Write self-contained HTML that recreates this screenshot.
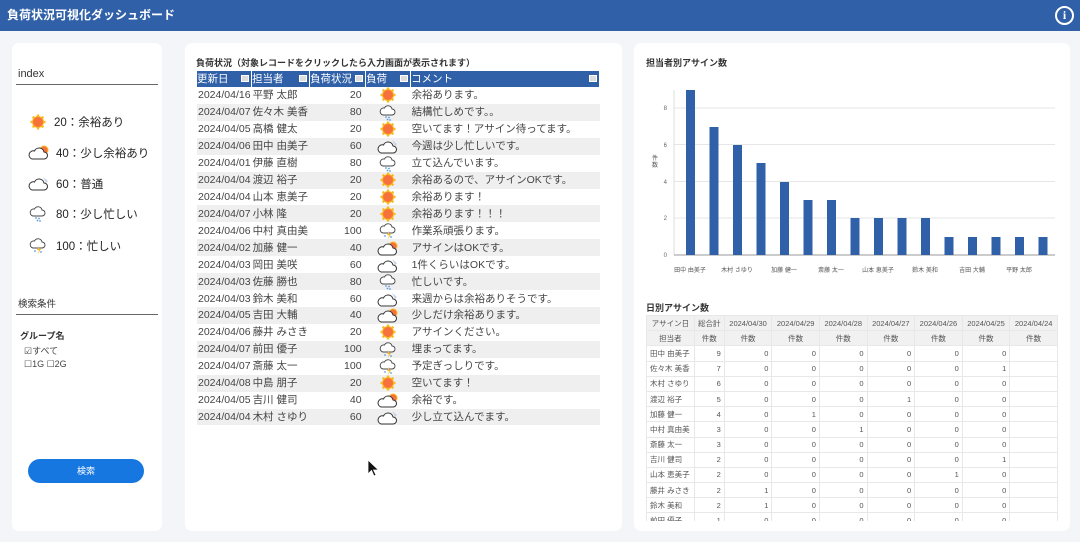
<!DOCTYPE html>
<html><head><meta charset="utf-8"><style>
*{margin:0;padding:0;box-sizing:border-box}
body{width:1080px;height:542px;background:#f3f5f9;font-family:"Liberation Sans","Noto Sans CJK JP",sans-serif;position:relative;overflow:hidden;color:#333}
.hdr{position:absolute;left:0;top:0;width:1080px;height:31px;background:#3060a8;color:#fff;font-weight:bold;font-size:12px;line-height:31px;padding-left:7px}
.info{position:absolute;right:6px;top:6px;width:19px;height:19px;border:2px solid #fff;border-radius:50%;color:#fff;font-size:12px;line-height:15px;text-align:center;font-weight:bold;font-family:"Liberation Serif",serif}
.panel{position:absolute;background:#fff;border-radius:7px;top:43px;height:488px}
.ttl{position:absolute;font-size:9px;font-weight:bold;color:#333}
.lh{position:absolute;left:4px;width:142px;border-bottom:1px solid #666;font-size:11px;line-height:14px;color:#333;padding-left:2px;padding-bottom:3px}
.idx{position:absolute;left:16px;font-size:11.5px;color:#222;display:flex;align-items:center}
.idx svg{margin-right:6px}
table{border-collapse:collapse}
#t1{position:absolute;left:12px;top:28px;font-size:10.5px;color:#444;table-layout:fixed}
#t1 th{background:#3060a8;color:#fff;font-weight:normal;text-align:left;height:16px;line-height:16px;border-right:1px solid #fff;padding:0;position:relative;vertical-align:middle}
#t1 th i{position:absolute;right:2px;top:4px;width:8px;height:7px;background:#ddd;border:1px solid #fff}
#t1 td{height:16.9px;line-height:16px;padding:0 1px;white-space:nowrap;vertical-align:middle;overflow:hidden}
#t1 tr:nth-child(odd) td{background:#efefef}
#t1 td.n{text-align:right;padding-right:4px}
#t1 td.c{text-align:center;padding:0;line-height:0}
#t1 td svg{vertical-align:middle}
#t2{position:absolute;left:12px;top:272px;font-size:7.5px;color:#555}
#t2 td{height:15.2px;line-height:13px;border:1px solid #e8e8e8;text-align:right;padding:0 3px;white-space:nowrap;vertical-align:middle}
#t2 tr.h td{background:#f1f1f1;text-align:center}
#t2 td.l{text-align:left}
</style></head><body>
<svg width="0" height="0" style="position:absolute">
<defs>
<g id="sun"><g stroke="#f8b820" stroke-width="2.4"><line x1="8" y1="0.5" x2="8" y2="15.5"/><line x1="0.5" y1="8" x2="15.5" y2="8"/><line x1="2.7" y1="2.7" x2="13.3" y2="13.3"/><line x1="13.3" y1="2.7" x2="2.7" y2="13.3"/></g><circle cx="8" cy="8" r="5.5" fill="#f7713a" stroke="#f8b820" stroke-width="1"/></g>
<g id="cl"><path d="M4 15 h12 a3.5 3.5 0 0 0 0-7 a5 5 0 0 0-9.5-1 a4 4 0 0 0-2.5 8z" fill="#fff" stroke="#333" stroke-width="1"/></g>
<g id="c40"><circle cx="16" cy="6" r="4" fill="#f7713a" stroke="#f8b820"/><use href="#cl"/></g>
<g id="c60"><path d="M15 2 l5 4 l-2 2z" fill="#c8d4e8"/><use href="#cl"/></g>
<g id="c80"><path d="M5 11 h9 a3 3 0 0 0 0-6 a4 4 0 0 0-7.5-1 a3.5 3.5 0 0 0-1.5 7z" fill="#fff" stroke="#444" stroke-width="0.9"/><g fill="#5b9ae0"><circle cx="8" cy="13" r="0.9"/><circle cx="11" cy="13.5" r="0.9"/><circle cx="9.5" cy="15.5" r="0.9"/><circle cx="12" cy="16" r="0.9"/></g></g>
<g id="c100"><path d="M5 11 h9 a3 3 0 0 0 0-6 a4 4 0 0 0-7.5-1 a3.5 3.5 0 0 0-1.5 7z" fill="#fff" stroke="#444" stroke-width="0.9"/><path d="M11 9 l-2 4 h2 l-1 4 l3-5 h-2z" fill="#f8b820"/><g fill="#5b9ae0"><circle cx="7" cy="14" r="0.9"/><circle cx="13" cy="15" r="0.9"/></g></g>
</defs></svg>
<div class="hdr">負荷状況可視化ダッシュボード</div><div class="info">i</div>

<div class="panel" style="left:12px;width:150px">
<div class="lh" style="top:24px">index</div>
<div class="idx" style="top:70px"><svg width="20" height="18"><use href="#sun" x="2" y="1"/></svg>20：余裕あり</div>
<div class="idx" style="top:101px"><svg width="22" height="18"><use href="#c40"/></svg>40：少し余裕あり</div>
<div class="idx" style="top:132px"><svg width="22" height="18"><use href="#c60"/></svg>60：普通</div>
<div class="idx" style="top:162px"><svg width="22" height="18"><use href="#c80"/></svg>80：少し忙しい</div>
<div class="idx" style="top:194px"><svg width="22" height="18"><use href="#c100"/></svg>100：忙しい</div>
<div class="lh" style="top:255px;font-size:9.5px;padding-bottom:2px">検索条件</div>
<div style="position:absolute;left:8px;top:286px;font-size:9px;font-weight:bold">グループ名</div>
<div style="position:absolute;left:12px;top:302px;font-size:9px;color:#444;line-height:13px">☑すべて<br>☐1G ☐2G</div>
<div style="position:absolute;left:16px;top:416px;width:116px;height:24px;border-radius:12px;background:#1677e0;color:#fff;font-size:9px;text-align:center;line-height:24px">検索</div>
</div>

<div class="panel" style="left:185px;width:437px">
<div class="ttl" style="left:11px;top:13px">負荷状況（対象レコードをクリックしたら入力画面が表示されます）</div>
<table id="t1">
<colgroup><col style="width:54px"><col style="width:58px"><col style="width:56px"><col style="width:45px"><col style="width:189px"></colgroup>
<tr><th>更新日<i></i></th><th>担当者<i></i></th><th>負荷状況<i></i></th><th>負荷<i></i></th><th>コメント<i></i></th></tr>
<tr><td>2024/04/16</td><td>平野 太郎</td><td class="n">20</td><td class="c"><svg width="16" height="16"><use href="#sun"/></svg></td><td>余裕あります。</td></tr>
<tr><td>2024/04/07</td><td>佐々木 美香</td><td class="n">80</td><td class="c"><svg width="20" height="17"><use href="#c80"/></svg></td><td>結構忙しめです。。</td></tr>
<tr><td>2024/04/05</td><td>高橋 健太</td><td class="n">20</td><td class="c"><svg width="16" height="16"><use href="#sun"/></svg></td><td>空いてます！アサイン待ってます。</td></tr>
<tr><td>2024/04/06</td><td>田中 由美子</td><td class="n">60</td><td class="c"><svg width="22" height="16"><use href="#c60"/></svg></td><td>今週は少し忙しいです。</td></tr>
<tr><td>2024/04/01</td><td>伊藤 直樹</td><td class="n">80</td><td class="c"><svg width="20" height="17"><use href="#c80"/></svg></td><td>立て込んでいます。</td></tr>
<tr><td>2024/04/04</td><td>渡辺 裕子</td><td class="n">20</td><td class="c"><svg width="16" height="16"><use href="#sun"/></svg></td><td>余裕あるので、アサインOKです。</td></tr>
<tr><td>2024/04/04</td><td>山本 恵美子</td><td class="n">20</td><td class="c"><svg width="16" height="16"><use href="#sun"/></svg></td><td>余裕あります！</td></tr>
<tr><td>2024/04/07</td><td>小林 隆</td><td class="n">20</td><td class="c"><svg width="16" height="16"><use href="#sun"/></svg></td><td>余裕あります！！！</td></tr>
<tr><td>2024/04/06</td><td>中村 真由美</td><td class="n">100</td><td class="c"><svg width="20" height="17"><use href="#c100"/></svg></td><td>作業系頑張ります。</td></tr>
<tr><td>2024/04/02</td><td>加藤 健一</td><td class="n">40</td><td class="c"><svg width="22" height="16"><use href="#c40"/></svg></td><td>アサインはOKです。</td></tr>
<tr><td>2024/04/03</td><td>岡田 美咲</td><td class="n">60</td><td class="c"><svg width="22" height="16"><use href="#c60"/></svg></td><td>1件くらいはOKです。</td></tr>
<tr><td>2024/04/03</td><td>佐藤 勝也</td><td class="n">80</td><td class="c"><svg width="20" height="17"><use href="#c80"/></svg></td><td>忙しいです。</td></tr>
<tr><td>2024/04/03</td><td>鈴木 美和</td><td class="n">60</td><td class="c"><svg width="22" height="16"><use href="#c60"/></svg></td><td>来週からは余裕ありそうです。</td></tr>
<tr><td>2024/04/05</td><td>吉田 大輔</td><td class="n">40</td><td class="c"><svg width="22" height="16"><use href="#c40"/></svg></td><td>少しだけ余裕あります。</td></tr>
<tr><td>2024/04/06</td><td>藤井 みさき</td><td class="n">20</td><td class="c"><svg width="16" height="16"><use href="#sun"/></svg></td><td>アサインください。</td></tr>
<tr><td>2024/04/07</td><td>前田 優子</td><td class="n">100</td><td class="c"><svg width="20" height="17"><use href="#c100"/></svg></td><td>埋まってます。</td></tr>
<tr><td>2024/04/07</td><td>斎藤 太一</td><td class="n">100</td><td class="c"><svg width="20" height="17"><use href="#c100"/></svg></td><td>予定ぎっしりです。</td></tr>
<tr><td>2024/04/08</td><td>中島 朋子</td><td class="n">20</td><td class="c"><svg width="16" height="16"><use href="#sun"/></svg></td><td>空いてます！</td></tr>
<tr><td>2024/04/05</td><td>吉川 健司</td><td class="n">40</td><td class="c"><svg width="22" height="16"><use href="#c40"/></svg></td><td>余裕です。</td></tr>
<tr><td>2024/04/04</td><td>木村 さゆり</td><td class="n">60</td><td class="c"><svg width="22" height="16"><use href="#c60"/></svg></td><td>少し立て込んでます。</td></tr>
</table>
<svg style="position:absolute;left:182px;top:416px" width="12" height="18"><path d="M1 1 v14 l3.5-3.5 l2.5 5.5 l2-1 l-2.5-5 h5z" fill="#111" stroke="#fff" stroke-width="0.8"/></svg>
</div>

<div class="panel" style="left:634px;width:436px">
<div class="ttl" style="left:12px;top:13px">担当者別アサイン数</div>
<svg style="position:absolute;left:0;top:0" width="436" height="240" font-family="Liberation Sans,Noto Sans CJK JP,sans-serif">
<g stroke="#e6e6e6" stroke-width="1"><line x1="40" y1="65" x2="421" y2="65"/><line x1="40" y1="101.5" x2="421" y2="101.5"/><line x1="40" y1="138.5" x2="421" y2="138.5"/><line x1="40" y1="175" x2="421" y2="175"/></g>
<line x1="40" y1="47" x2="40" y2="212" stroke="#ddd"/>
<line x1="40" y1="212" x2="421" y2="212" stroke="#999"/>
<g font-size="6" fill="#666" text-anchor="end"><text x="33" y="214">0</text><text x="33" y="177">2</text><text x="33" y="141">4</text><text x="33" y="104">6</text><text x="33" y="67">8</text></g>
<text x="18" y="117" font-size="6" fill="#555">件</text><text x="18" y="124" font-size="6" fill="#555">数</text>
<g fill="#3060a8">
<rect x="52" y="47" width="9" height="165"/><rect x="75.5" y="84" width="9" height="128"/><rect x="99" y="102" width="9" height="110"/><rect x="122.5" y="120" width="9" height="92"/><rect x="146" y="139" width="9" height="73"/><rect x="169.5" y="157" width="9" height="55"/><rect x="193" y="157" width="9" height="55"/><rect x="216.5" y="175" width="9" height="37"/><rect x="240" y="175" width="9" height="37"/><rect x="263.5" y="175" width="9" height="37"/><rect x="287" y="175" width="9" height="37"/><rect x="310.5" y="194" width="9" height="18"/><rect x="334" y="194" width="9" height="18"/><rect x="357.5" y="194" width="9" height="18"/><rect x="381" y="194" width="9" height="18"/><rect x="404.5" y="194" width="9" height="18"/>
</g>
<g font-size="6" fill="#555" text-anchor="middle"><text x="56" y="229">田中 由美子</text><text x="103" y="229">木村 さゆり</text><text x="150" y="229">加藤 健一</text><text x="197" y="229">斎藤 太一</text><text x="244" y="229">山本 恵美子</text><text x="291" y="229">鈴木 美和</text><text x="338" y="229">吉田 大輔</text><text x="385" y="229">平野 太郎</text></g>
</svg>
<div class="ttl" style="left:12px;top:258px">日別アサイン数</div>
<div style="position:absolute;left:0;top:0;width:424px;height:478px;overflow:hidden">
<table id="t2">
<tr class="h"><td style="width:48px">アサイン日</td><td style="width:30px">総合計</td><td style="width:48px">2024/04/30</td><td style="width:48px">2024/04/29</td><td style="width:48px">2024/04/28</td><td style="width:48px">2024/04/27</td><td style="width:48px">2024/04/26</td><td style="width:48px">2024/04/25</td><td style="width:48px">2024/04/24</td></tr>
<tr class="h"><td>担当者</td><td>件数</td><td>件数</td><td>件数</td><td>件数</td><td>件数</td><td>件数</td><td>件数</td><td>件数</td></tr>
<tr><td class="l">田中 由美子</td><td>9</td><td>0</td><td>0</td><td>0</td><td>0</td><td>0</td><td>0</td><td></td></tr>
<tr><td class="l">佐々木 美香</td><td>7</td><td>0</td><td>0</td><td>0</td><td>0</td><td>0</td><td>1</td><td></td></tr>
<tr><td class="l">木村 さゆり</td><td>6</td><td>0</td><td>0</td><td>0</td><td>0</td><td>0</td><td>0</td><td></td></tr>
<tr><td class="l">渡辺 裕子</td><td>5</td><td>0</td><td>0</td><td>0</td><td>1</td><td>0</td><td>0</td><td></td></tr>
<tr><td class="l">加藤 健一</td><td>4</td><td>0</td><td>1</td><td>0</td><td>0</td><td>0</td><td>0</td><td></td></tr>
<tr><td class="l">中村 真由美</td><td>3</td><td>0</td><td>0</td><td>1</td><td>0</td><td>0</td><td>0</td><td></td></tr>
<tr><td class="l">斎藤 太一</td><td>3</td><td>0</td><td>0</td><td>0</td><td>0</td><td>0</td><td>0</td><td></td></tr>
<tr><td class="l">吉川 健司</td><td>2</td><td>0</td><td>0</td><td>0</td><td>0</td><td>0</td><td>1</td><td></td></tr>
<tr><td class="l">山本 恵美子</td><td>2</td><td>0</td><td>0</td><td>0</td><td>0</td><td>1</td><td>0</td><td></td></tr>
<tr><td class="l">藤井 みさき</td><td>2</td><td>1</td><td>0</td><td>0</td><td>0</td><td>0</td><td>0</td><td></td></tr>
<tr><td class="l">鈴木 美和</td><td>2</td><td>1</td><td>0</td><td>0</td><td>0</td><td>0</td><td>0</td><td></td></tr>
<tr><td class="l">前田 優子</td><td>1</td><td>0</td><td>0</td><td>0</td><td>0</td><td>0</td><td>0</td><td></td></tr>
</table>
</div>
</div>
</body></html>
